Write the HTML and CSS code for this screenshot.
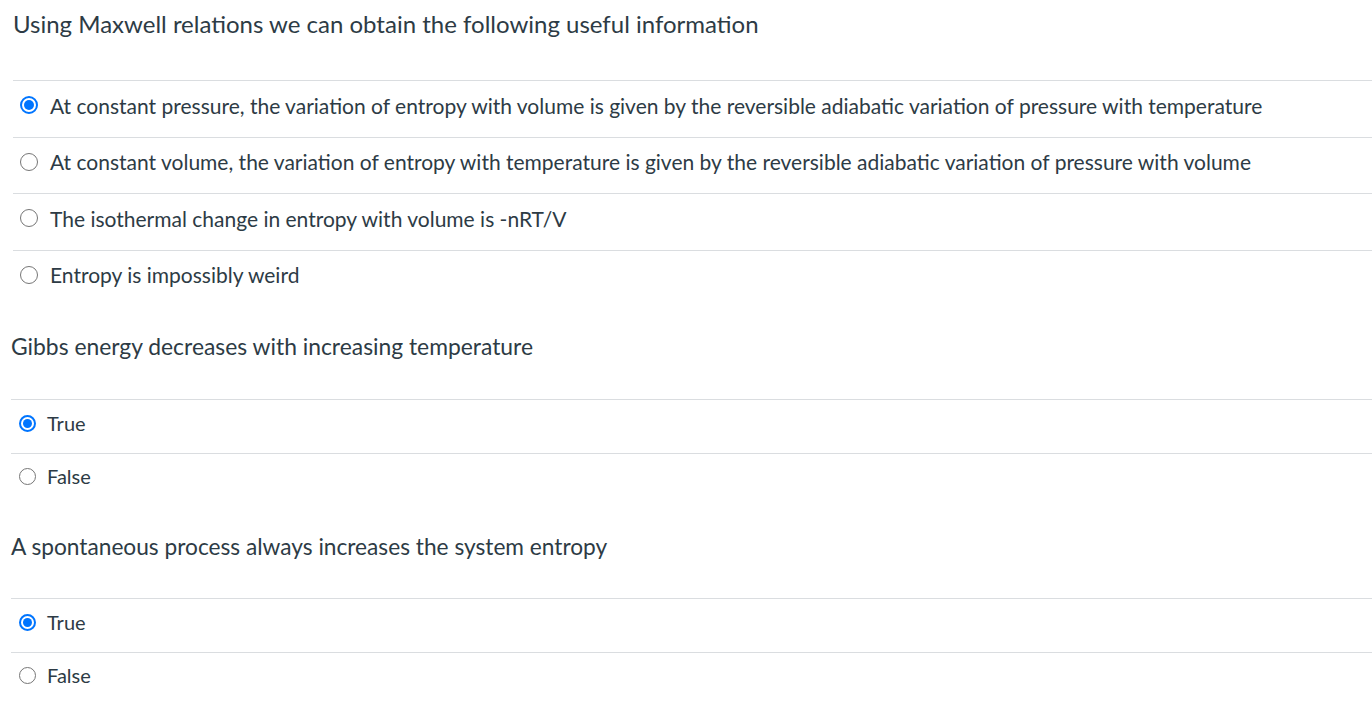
FILE: index.html
```html
<!DOCTYPE html>
<html>
<head>
<meta charset="utf-8">
<link rel="stylesheet" href="styles.css">
</head>
<body>
<div class="page">
  <section class="question q1">
    <div class="q-title">Using Maxwell relations we can obtain the following useful information</div>
    <div class="answers">
      <div class="answer"><span class="radio checked"></span><span class="label">At constant pressure, the variation of entropy with volume is given by the reversible adiabatic variation of pressure with temperature</span></div>
      <div class="answer"><span class="radio"></span><span class="label">At constant volume, the variation of entropy with temperature is given by the reversible adiabatic variation of pressure with volume</span></div>
      <div class="answer"><span class="radio"></span><span class="label">The isothermal change in entropy with volume is -nRT/V</span></div>
      <div class="answer"><span class="radio"></span><span class="label">Entropy is impossibly weird</span></div>
    </div>
  </section>
  <section class="question q2">
    <div class="q-title">Gibbs energy decreases with increasing temperature</div>
    <div class="answers">
      <div class="answer"><span class="radio checked"></span><span class="label">True</span></div>
      <div class="answer"><span class="radio"></span><span class="label">False</span></div>
    </div>
  </section>
  <section class="question q3">
    <div class="q-title">A spontaneous process always increases the system entropy</div>
    <div class="answers">
      <div class="answer"><span class="radio checked"></span><span class="label">True</span></div>
      <div class="answer"><span class="radio"></span><span class="label">False</span></div>
    </div>
  </section>
</div>
</body>
</html>
```

FILE: styles.css
```css
html, body {
  margin: 0;
  padding: 0;
  background: #ffffff;
}
body {
  font-family: Lato, "Open Sans", sans-serif;
  color: #2d3b45;
}
.page {
  display: flex;
  flex-direction: column;
}
.question {
  display: flex;
  flex-direction: column;
}
.q-title {
  line-height: 30px;
  white-space: nowrap;
}
.answer {
  display: flex;
  align-items: center;
  border-top: 1px solid #dadde0;
  white-space: nowrap;
  box-sizing: border-box;
}
.radio {
  flex: none;
  box-sizing: border-box;
  border-radius: 50%;
  border: 1.5px solid #767676;
  background: #fff;
  position: relative;
}
.radio.checked {
  border: 2px solid #0075ff;
}
.radio.checked::after {
  content: "";
  position: absolute;
  inset: 2px;
  border-radius: 50%;
  background: #0075ff;
}

/* Question 1 */
.q1 {
  padding-left: 13px;
}
.q1 .q-title {
  font-size: 24px;
  padding-top: 9px;
  margin-bottom: 41px;
}
.q1 .answer {
  height: 56.5px;
  font-size: 21px;
  padding-bottom: 7px;
}
.q1 .radio {
  width: 18px;
  height: 18px;
  margin-left: 7px;
  margin-right: 12px;
}

/* Questions 2 and 3 */
.q2, .q3 {
  padding-left: 11px;
}
.q2 .q-title {
  font-size: 22.85px;
  margin-top: -1px;
  margin-bottom: 38px;
}
.q3 .q-title {
  font-size: 22.7px;
  margin-top: 1px;
  margin-bottom: 36px;
}
.q2 {
  margin-top: 26px;
}
.q3 {
  margin-top: 24px;
}
.q2 .answer, .q3 .answer {
  height: 54px;
  font-size: 20px;
  padding-bottom: 7px;
}
.q2 .answer + .answer, .q3 .answer + .answer {
  padding-bottom: 9px;
}
.q2 .radio, .q3 .radio {
  width: 17px;
  height: 17px;
  margin-left: 8px;
  margin-right: 11px;
}
```
